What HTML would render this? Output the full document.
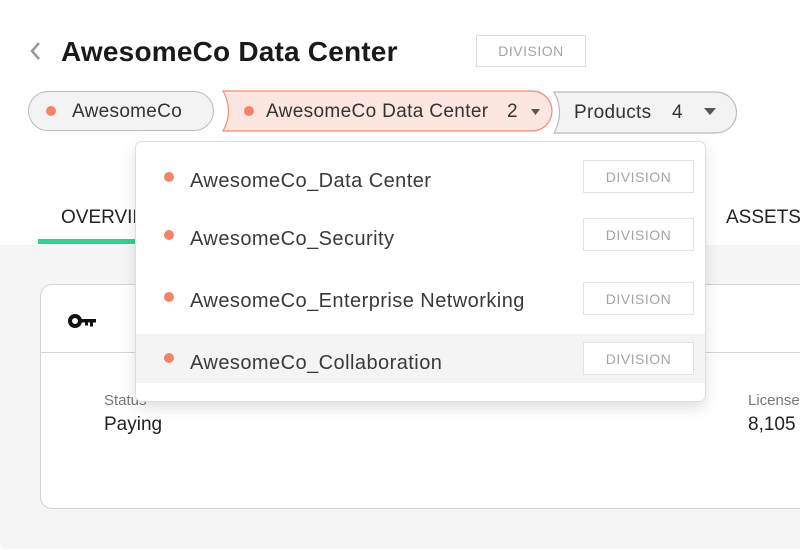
<!DOCTYPE html>
<html><head><meta charset="utf-8"><style>
*{margin:0;padding:0;box-sizing:border-box}
body{width:800px;height:550px;overflow:hidden;background:#fff;font-family:"Liberation Sans",sans-serif;position:relative;color:#222}
.abs{position:absolute}
.badge{position:absolute;border:1px solid #e2e2e2;color:#a5a5a5;font-size:14px;letter-spacing:.5px;display:flex;align-items:center;justify-content:center;background:#fff}
.dot{position:absolute;width:10px;height:10px;border-radius:50%;background:#f7826a}
.row{position:absolute;left:0;width:571px}
.row .t{position:absolute;left:54px;font-size:20px;letter-spacing:.45px;color:#3a3a3a}
</style></head><body>
<div class="abs" style="left:0;top:245px;width:800px;height:304px;background:#f5f5f5;border-bottom-left-radius:8px"></div>
<div class="abs" style="left:40px;top:284px;width:780px;height:225px;background:#fff;border:1px solid #d4d4d4;border-radius:12px"></div>
<div class="abs" style="left:40px;top:352px;width:760px;height:1px;background:#d4d4d4"></div>
<svg class="abs" style="left:68px;top:312px" width="30" height="18" viewBox="0 0 30 18"><circle cx="7" cy="9" r="5" fill="none" stroke="#111" stroke-width="4"/><path d="M11 7h17v3.5h-3v4h-3v-4h-2v3h-3v-3h-6z" fill="#111"/></svg>
<div class="abs" style="left:104px;top:392px;font-size:15px;color:#777">Status</div>
<div class="abs" style="left:104px;top:414px;font-size:19px;color:#222">Paying</div>
<div class="abs" style="left:748px;top:392px;font-size:15px;color:#777">License</div>
<div class="abs" style="left:748px;top:414px;font-size:19px;color:#222">8,105</div>
<div class="abs" style="left:61px;top:207px;font-size:19px;color:#222">OVERVIEW</div>
<div class="abs" style="left:726px;top:207px;font-size:19px;color:#222">ASSETS</div>
<div class="abs" style="left:38px;top:239px;width:100px;height:5px;background:#2bd48f"></div>

<svg class="abs" style="left:28px;top:41px" width="14" height="20"><path d="M11 2L4 10l7 8" fill="none" stroke="#999" stroke-width="2.5"/></svg>
<div class="abs" style="left:61px;top:36px;font-size:28px;font-weight:bold;color:#1a1a1a;letter-spacing:.2px">AwesomeCo Data Center</div>
<div class="badge" style="left:476px;top:35px;width:110px;height:32px;border-color:#ddd">DIVISION</div>

<div class="abs" style="left:28px;top:91px;width:186px;height:40px;border:1px solid #bbb;border-radius:20px;background:#f3f3f3"></div>
<div class="dot" style="left:46px;top:106px"></div>
<div class="abs" style="left:72px;top:101px;font-size:19px;color:#333;letter-spacing:.3px">AwesomeCo</div>

<svg class="abs" style="left:220px;top:89px" width="520" height="46">
<path d="M3 2H312a20 20 0 0 1 0 40H3Q14 22 3 2z" fill="#fde6e0" stroke="#f28b72" stroke-width="1.2"/>
<path d="M334 3H496a19.5 19.5 0 0 1 0 41H334Q345 23 334 3z" fill="#f3f3f3" stroke="#bbb" stroke-width="1.2"/>
<path d="M311 20h9l-4.5 6z" fill="#555"/>
<path d="M484 19h12l-6 7z" fill="#555"/>
</svg>
<div class="dot" style="left:244px;top:106px"></div>
<div class="abs" style="left:266px;top:101px;font-size:19px;color:#333;letter-spacing:.35px">AwesomeCo Data Center</div>
<div class="abs" style="left:507px;top:101px;font-size:19px;color:#333">2</div>
<div class="abs" style="left:574px;top:102px;font-size:19px;color:#333;letter-spacing:.3px">Products</div>
<div class="abs" style="left:672px;top:102px;font-size:19px;color:#333">4</div>

<div class="abs" style="left:135px;top:141px;width:571px;height:261px;background:#fff;border:1px solid #ddd;border-radius:7px;box-shadow:0 6px 14px rgba(0,0,0,.12);overflow:hidden">
 <div class="row" style="top:0;height:70px"><div class="dot" style="left:28px;top:30px"></div><div class="t" style="top:28px">AwesomeCo_Data Center</div><div class="badge" style="left:447px;top:18px;width:111px;height:33px">DIVISION</div></div>
 <div class="row" style="top:70px;height:60px"><div class="dot" style="left:28px;top:18px"></div><div class="t" style="top:16px">AwesomeCo_Security</div><div class="badge" style="left:447px;top:6px;width:111px;height:33px">DIVISION</div></div>
 <div class="row" style="top:130px;height:62px"><div class="dot" style="left:28px;top:20px"></div><div class="t" style="top:18px">AwesomeCo_Enterprise Networking</div><div class="badge" style="left:447px;top:10px;width:111px;height:33px">DIVISION</div></div>
 <div class="row" style="top:192px;height:49px;background:#f4f4f4"><div class="dot" style="left:28px;top:19px"></div><div class="t" style="top:18px">AwesomeCo_Collaboration</div><div class="badge" style="left:447px;top:8px;width:111px;height:33px">DIVISION</div></div>
</div>
</body></html>
